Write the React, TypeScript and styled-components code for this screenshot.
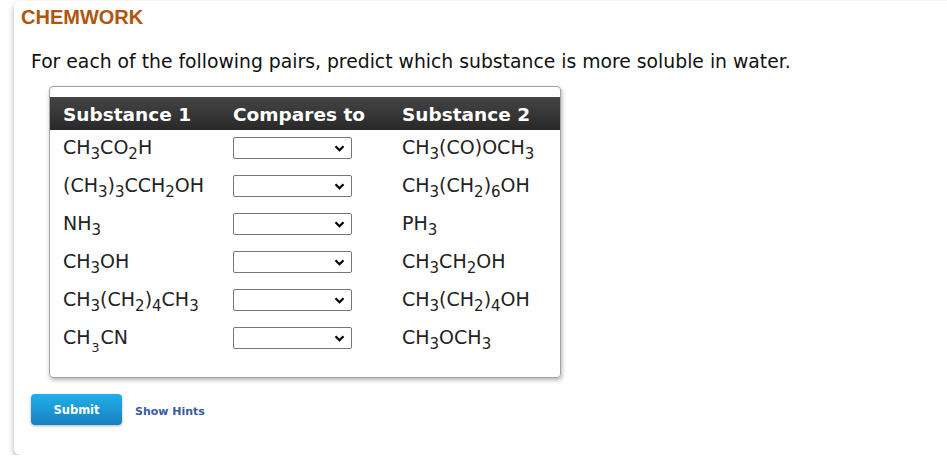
import React from "react";
import styled, { createGlobalStyle } from "styled-components";

const Global = createGlobalStyle`
  html, body { margin: 0; padding: 0; background: #ffffff; }
  body { font-family: "DejaVu Sans", Verdana, sans-serif; overflow: hidden; }
`;

const Card = styled.div`
  margin: 1px 0 0 14px;
  width: 960px;
  height: 454px;
  box-sizing: border-box;
  background: #fff;
  border-radius: 6px;
  box-shadow: 0 3px 6px rgba(0, 0, 0, 0.3);
  padding: 4px 0 0 7px;
`;

const Title = styled.div`
  font-family: "Liberation Sans", Arial, sans-serif;
  font-weight: bold;
  font-size: 20px;
  line-height: 24px;
  color: #b0550d;
`;

const Prompt = styled.p`
  margin: 22px 0 0 10px;
  font-size: 18.8px;
  line-height: 22px;
  color: #111;
`;

const TableBox = styled.div`
  margin: 13px 0 0 28px;
  width: 512px;
  height: 292px;
  box-sizing: border-box;
  border: 1px solid #a3a3a3;
  border-radius: 4px;
  box-shadow: 1px 2px 4px rgba(0, 0, 0, 0.3);
  padding-top: 10px;
`;

const columns = "170px 169px 1fr";

const HeadRow = styled.div`
  display: grid;
  grid-template-columns: ${columns};
  height: 33px;
  box-sizing: border-box;
  padding: 4px 0 0 13px;
  background: linear-gradient(to bottom, #454545, #282828);
`;

const HeadCell = styled.div`
  line-height: 28px;
  font-weight: bold;
  font-size: 18.5px;
  color: #fff;
  white-space: nowrap;
`;

const Body = styled.div`
  display: grid;
  grid-template-columns: ${columns};
  grid-auto-rows: 38px;
  padding-left: 13px;
`;

const Cell = styled.div`
  box-sizing: border-box;
  padding-top: 6px;
  font-size: 19px;
  line-height: 22px;
  color: #222;
  white-space: nowrap;
`;

const Sub = styled.sub`
  font-size: 15px;
  line-height: 0;
  vertical-align: -5px;
`;

const LowSub = styled.sub`
  font-size: 12.5px;
  line-height: 0;
  vertical-align: -8px;
  margin: 0 1px;
`;

const SelectCell = styled.div`
  box-sizing: border-box;
  padding-top: 7px;
`;

const SelectWrap = styled.div`
  position: relative;
  width: 119px;
  height: 22px;
`;

const Select = styled.select`
  appearance: none;
  -webkit-appearance: none;
  width: 119px;
  height: 22px;
  box-sizing: border-box;
  border: 1px solid #767676;
  border-radius: 2px;
  background: #fff;
  font-family: "DejaVu Sans", sans-serif;
  font-size: 13px;
  margin: 0;
  display: block;
`;

const Chevron = styled.svg`
  position: absolute;
  right: 7px;
  top: 8px;
  pointer-events: none;
`;

const Actions = styled.div`
  display: flex;
  align-items: center;
  margin: 16px 0 0 10px;
  gap: 13px;
`;

const SubmitButton = styled.button`
  width: 91px;
  height: 31px;
  border: none;
  border-radius: 4px;
  background: linear-gradient(to bottom, #1fb0ea, #1980c0);
  box-shadow: 0 1px 3px rgba(0, 0, 0, 0.3);
  color: #fff;
  font-family: "DejaVu Sans", Verdana, sans-serif;
  font-weight: bold;
  font-size: 11.5px;
  padding: 1px 0 0;
`;

const HintLink = styled.span`
  font-weight: bold;
  font-size: 11px;
  color: #3a5aa3;
  margin-top: 4px;
`;

type Formula = React.ReactNode;

const rows: { a: Formula; b: Formula }[] = [
  { a: <>CH<Sub>3</Sub>CO<Sub>2</Sub>H</>, b: <>CH<Sub>3</Sub>(CO)OCH<Sub>3</Sub></> },
  { a: <>(CH<Sub>3</Sub>)<Sub>3</Sub>CCH<Sub>2</Sub>OH</>, b: <>CH<Sub>3</Sub>(CH<Sub>2</Sub>)<Sub>6</Sub>OH</> },
  { a: <>NH<Sub>3</Sub></>, b: <>PH<Sub>3</Sub></> },
  { a: <>CH<Sub>3</Sub>OH</>, b: <>CH<Sub>3</Sub>CH<Sub>2</Sub>OH</> },
  { a: <>CH<Sub>3</Sub>(CH<Sub>2</Sub>)<Sub>4</Sub>CH<Sub>3</Sub></>, b: <>CH<Sub>3</Sub>(CH<Sub>2</Sub>)<Sub>4</Sub>OH</> },
  { a: <>CH<LowSub>3</LowSub>CN</>, b: <>CH<Sub>3</Sub>OCH<Sub>3</Sub></> },
];

export default function App() {
  return (
    <>
      <Global />
      <Card>
        <Title>CHEMWORK</Title>
        <Prompt>For each of the following pairs, predict which substance is more soluble in water.</Prompt>
        <TableBox>
          <HeadRow>
            <HeadCell>Substance 1</HeadCell>
            <HeadCell>Compares to</HeadCell>
            <HeadCell>Substance 2</HeadCell>
          </HeadRow>
          <Body>
            {rows.map((r, i) => (
              <React.Fragment key={i}>
                <Cell>{r.a}</Cell>
                <SelectCell>
                  <SelectWrap>
                    <Select defaultValue="">
                      <option value=""></option>
                      <option value="more">is more soluble than</option>
                      <option value="less">is less soluble than</option>
                    </Select>
                    <Chevron width="11" height="7" viewBox="0 0 11 7">
                      <path d="M1.5 1.3 L5.5 5.3 L9.5 1.3" fill="none" stroke="#000" strokeWidth="2.2" />
                    </Chevron>
                  </SelectWrap>
                </SelectCell>
                <Cell>{r.b}</Cell>
              </React.Fragment>
            ))}
          </Body>
        </TableBox>
        <Actions>
          <SubmitButton>Submit</SubmitButton>
          <HintLink>Show Hints</HintLink>
        </Actions>
      </Card>
    </>
  );
}
